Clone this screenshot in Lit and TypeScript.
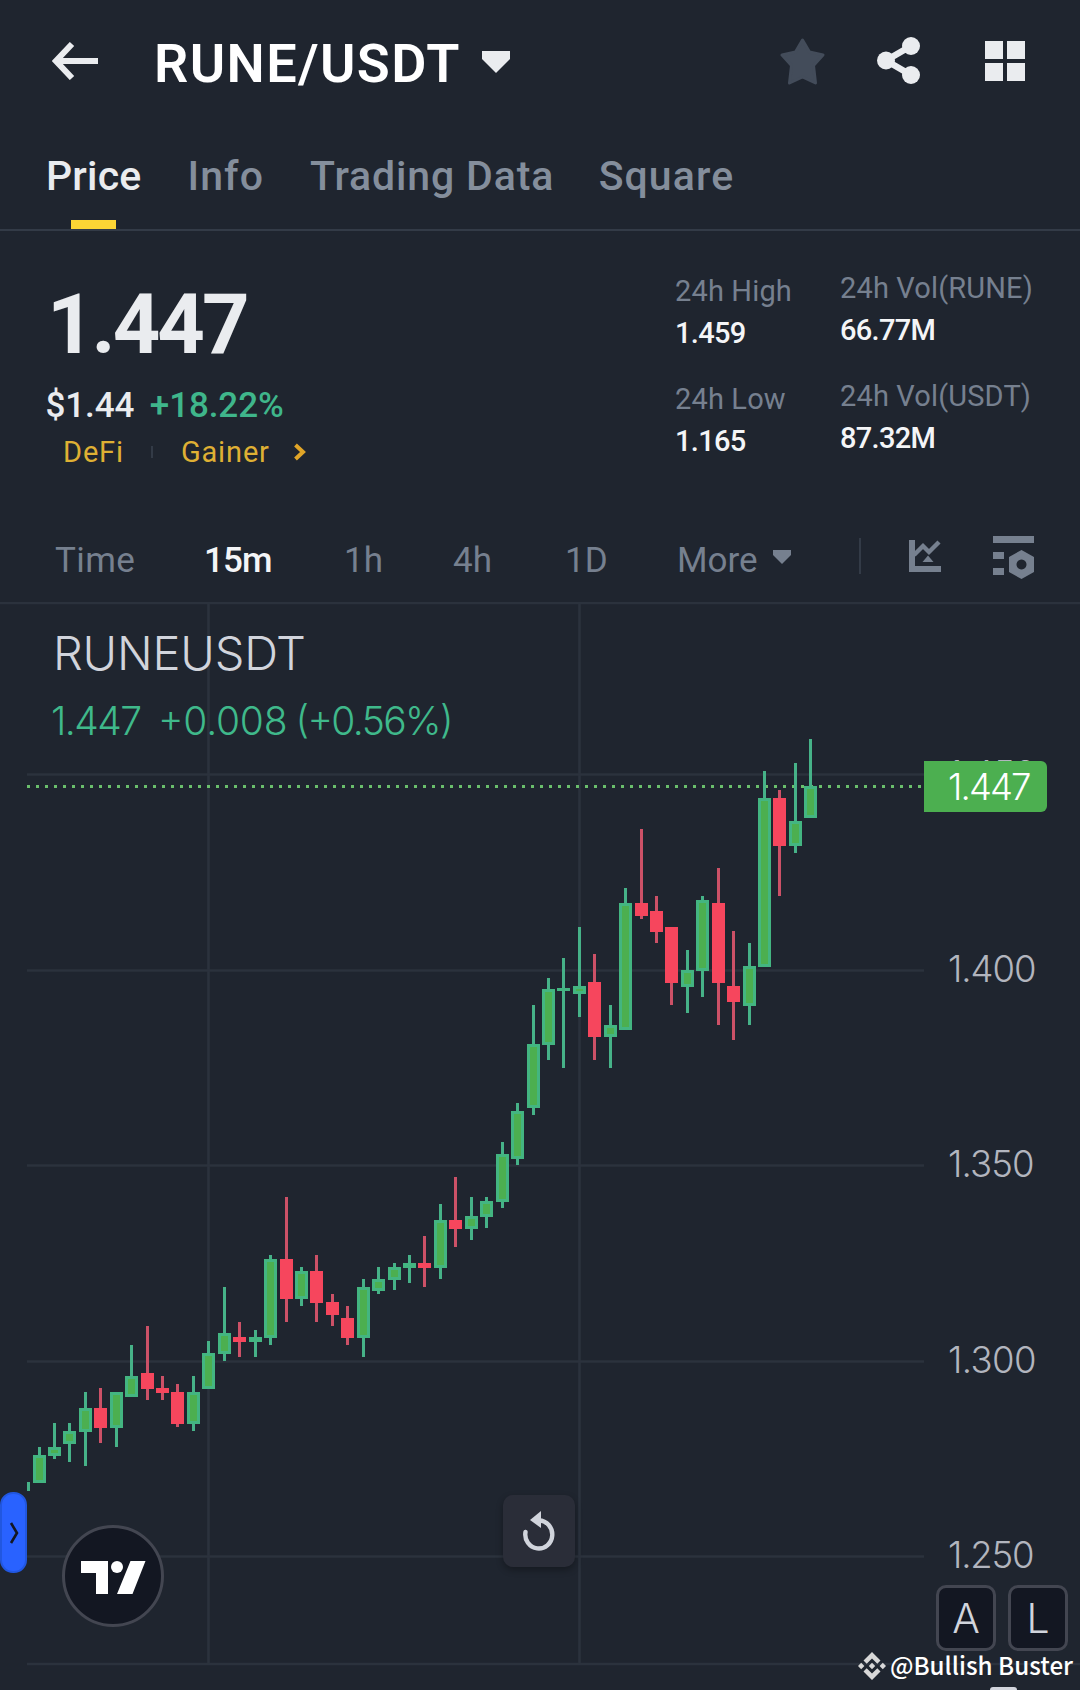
import { LitElement, html, svg, css } from "lit";
import { customElement } from "lit/decorators.js";
import { classMap } from "lit/directives/class-map.js";

type Candle = [x: number, up: 0 | 1, high: number, top: number, bottom: number, low: number];

// Candle geometry in page coordinates: centre, direction, wick top, body top, body bottom, wick bottom.
const CANDLES: Candle[] = [
  [39.5, 1, 1447, 1455, 1483, 1483], [54.5, 1, 1423, 1447, 1456, 1459],
  [69.5, 1, 1423, 1431, 1444, 1462], [85.5, 1, 1392, 1408, 1432, 1466],
  [100.5, 0, 1388, 1408, 1428, 1443], [116.5, 1, 1392, 1392, 1428, 1447],
  [131.5, 1, 1345, 1376, 1397, 1397], [147.5, 0, 1326, 1373, 1389, 1400],
  [162.5, 0, 1376, 1388, 1393, 1400], [177.5, 0, 1384, 1392, 1424, 1427],
  [193.5, 1, 1376, 1392, 1424, 1431], [208.5, 1, 1341, 1353, 1389, 1389],
  [224.5, 1, 1287, 1333, 1354, 1361], [239.5, 0, 1322, 1337, 1342, 1357],
  [255.5, 1, 1330, 1337, 1342, 1357], [270.5, 1, 1255, 1259, 1338, 1345],
  [286.5, 0, 1197, 1259, 1299, 1322], [301.5, 1, 1267, 1271, 1299, 1306],
  [316.5, 0, 1255, 1271, 1303, 1322], [332.5, 0, 1294, 1302, 1315, 1326],
  [347.5, 0, 1306, 1318, 1338, 1345], [363.5, 1, 1279, 1287, 1338, 1357],
  [378.5, 1, 1267, 1279, 1291, 1294], [394.5, 1, 1263, 1267, 1280, 1290],
  [409.5, 1, 1255, 1263, 1268, 1283], [424.5, 0, 1236, 1263, 1268, 1287],
  [440.5, 1, 1204, 1220, 1268, 1279], [455.5, 0, 1177, 1220, 1229, 1247],
  [471.5, 1, 1197, 1216, 1229, 1240], [486.5, 1, 1197, 1201, 1217, 1228],
  [502.5, 1, 1142, 1154, 1202, 1208], [517.5, 1, 1103, 1111, 1159, 1165],
  [533.5, 1, 1005, 1044, 1108, 1115], [548.5, 1, 978, 989, 1045, 1060],
  [563.5, 1, 958, 988, 991, 1068], [579.5, 1, 927, 986, 994, 1017],
  [594.5, 0, 954, 982, 1037, 1060], [610.5, 1, 1005, 1025, 1037, 1068],
  [625.5, 1, 888, 903, 1030, 1030], [641.5, 0, 829, 903, 916, 919],
  [656.5, 0, 896, 911, 932, 943], [671.5, 0, 927, 927, 983, 1005],
  [687.5, 1, 950, 970, 987, 1013], [702.5, 1, 896, 900, 971, 997],
  [718.5, 0, 868, 903, 983, 1025], [733.5, 0, 931, 986, 1002, 1040],
  [749.5, 1, 943, 966, 1006, 1025], [764.5, 1, 771, 798, 967, 967],
  [779.5, 0, 790, 798, 846, 896], [795.5, 1, 763, 821, 846, 853],
  [810.5, 1, 739, 786, 818, 818],
];

// Label, grid line position, text baseline.
const LEVELS: [string, number, number][] = [
  ["1.450", 774, 786.5], ["1.400", 970, 982.3], ["1.350", 1165, 1177.3], ["1.300", 1361, 1373.3], ["1.250", 1556, 1568.3],
];

@customElement("price-chart")
class PriceChart extends LitElement {
  static styles = css`
    :host { display: block; position: relative; height: 1088px; overflow: hidden; }
    .plot { display: block; width: 1080px; height: 1088px; }
    .plot text { font-family: Inter, "Liberation Sans", sans-serif; font-weight: 300; }
    .grid { stroke: #2b323d; stroke-width: 2.6; fill: none; }
    .tick { fill: #b2b5be; font-size: 36.5px; }
    .symbol { fill: #d1d4dc; font-size: 47px; }
    .quote { fill: #3fb98b; font-size: 39px; }
    .last { fill: #fff; font-size: 36.5px; }
    .up { fill: #43b581; }
    .up-fill { fill: #4caf50; }
    .up-wick { fill: #46b288; }
    .down { fill: #f6465d; }
    .down-wick { fill: #cc5167; }
    .dots { stroke: #6abf6c; stroke-width: 3; stroke-dasharray: 3 6; }
    .drawer, .reload, .brand, .keys, .mark { position: absolute; }
    .drawer { left: 0; top: 890px; width: 27px; height: 81px; border-radius: 13px; box-sizing: border-box;
      background: #2962ff; border: 2px solid #2157e0; display: grid; place-items: center; }
    .reload { left: 503px; top: 893px; width: 72px; height: 72px; border-radius: 10px; background: #2a2d38;
      display: grid; place-items: center; box-shadow: 0 3px 7px rgba(0, 0, 0, 0.32); }
    .brand { left: 61.5px; top: 923px; width: 102px; height: 102px; }
    .keys { right: 12px; top: 983px; display: flex; gap: 12px; }
    .key { width: 60px; height: 66px; box-sizing: border-box; border: 3px solid #434651; border-radius: 10px;
      background: #131722; color: #d1d4dc; font: 300 41px/60px Inter, "Liberation Sans", sans-serif; text-align: center; }
    .mark { right: 7px; top: 1048px; display: flex; align-items: center; gap: 4px; color: #fff;
      font: 500 24.2px/32px "Noto Sans CJK SC", sans-serif; white-space: nowrap; }
    .mark span { margin-top: -1px; }
    .handle { position: absolute; left: 990px; top: 1085px; width: 27px; height: 6px; border-radius: 3px; background: #d1d4dc; }
    svg { display: block; }
  `;

  private candle([x, up, high, top, bottom, low]: Candle) {
    const h = bottom - top;
    return svg`
      <rect class=${up ? "up-wick" : "down-wick"} x=${x - 1.5} y=${high} width="3" height=${low - high}></rect>
      <rect class=${up ? "up" : "down"} x=${x - 6.5} y=${top} width="13" height=${h}></rect>
      ${up && h > 7 ? svg`<rect class="up-fill" x=${x - 3.5} y=${top + 3} width="7" height=${h - 6}></rect>` : null}`;
  }

  render() {
    return html`
      <svg class="plot" viewBox="0 602 1080 1088">
        <path class="grid" d="M0 603H1080M208.5 603V1664M579.5 603V1664M27 1664H1080"></path>
        ${LEVELS.map(([label, y, base]) => svg`
          <path class="grid" d="M27 ${y + 0.5}H924"></path>
          <text class="tick" x="948" y=${base} textLength=${label === "1.350" || label === "1.250" ? 86.5 : 88.5}>${label}</text>`)}
        <path class="dots" d="M27 786.5H924"></path>
        <rect class="up-wick" x="27" y="1482" width="3" height="9"></rect>
        ${CANDLES.map((c) => this.candle(c))}
        <path class="up-fill" d="M924 761H1041a6 6 0 0 1 6 6V806a6 6 0 0 1-6 6H924Z"></path>
        <text class="last" x="948" y="799.5" textLength="83.5">1.447</text>
        <text class="symbol" x="53" y="670" textLength="253">RUNEUSDT</text>
        <text class="quote" x="51" y="735" textLength="91">1.447</text>
        <text class="quote" x="158" y="735" textLength="129.5">+0.008</text>
        <text class="quote" x="295.5" y="735" textLength="158">(+0.56%)</text>
      </svg>
      <div class="drawer">
        <svg width="12" height="24" viewBox="0 0 12 24"><path d="M3 2L9 12L3 22" fill="none" stroke="#131722" stroke-width="2.6"></path></svg>
      </div>
      <div class="brand">
        <svg width="102" height="102" viewBox="0 0 102 102">
          <circle cx="51" cy="51" r="49.5" fill="#131722" stroke="#434651" stroke-width="3"></circle>
          <path fill="#fff" d="M19 36H46V69H34V48H19ZM68.5 36H83.5L70.5 69H55Z"></path>
          <circle cx="55" cy="42" r="6" fill="#fff"></circle>
        </svg>
      </div>
      <div class="reload">
        <svg width="36" height="40" viewBox="0 0 36 40">
          <path d="M4.5 21A13.5 14 0 1 0 18 9.5" fill="none" stroke="#d1d4dc" stroke-width="4.4" stroke-linecap="round"></path>
          <path d="M20 0V17L9 9Z" fill="#d1d4dc"></path>
        </svg>
      </div>
      <div class="keys"><div class="key">A</div><div class="key">L</div></div>
      <div class="mark">
        <svg width="28" height="28" viewBox="0 0 28 28" fill="#d8d8d8">
          <path d="M14 0L22.5 8.5L19.3 11.7L14 6.4L8.7 11.7L5.5 8.5ZM14 28L22.5 19.5L19.3 16.3L14 21.6L8.7 16.3L5.5 19.5ZM14 10.8L17.2 14L14 17.2L10.8 14ZM3.2 10.8L6.4 14L3.2 17.2L0 14ZM24.8 10.8L28 14L24.8 17.2L21.6 14Z"></path>
        </svg>
        <span>@Bullish Buster</span>
      </div>
      <div class="handle"></div>`;
  }
}

@customElement("app-root")
class AppRoot extends LitElement {
  static styles = css`
    :host { display: block; width: 1080px; height: 1690px; overflow: hidden; background: #1f252f;
      color: #eaecef; font-family: Roboto, "Noto Sans", sans-serif; white-space: nowrap; }
    svg { display: block; }
    .header { display: flex; align-items: center; height: 124px; box-sizing: border-box; padding: 0 55px 2px 52px; }
    .pair { margin-left: 56px; padding-top: 5px; font-size: 54px; font-weight: 600; line-height: 60px; color: #fff; letter-spacing: 1.4px; }
    .pair-caret { margin: 1px 0 0 21px; }
    .actions { display: flex; align-items: center; margin-left: auto; }
    .star { margin-right: 52px; }
    .share { margin: -1px 65px 0 0; }
    .tabs { display: flex; height: 105px; padding: 27px 0 0 46px; box-sizing: border-box; gap: 46px; }
    .tab { display: flex; flex-direction: column; align-items: center; gap: 19px; font-size: 41px; line-height: 50px; font-weight: 500; color: #848e9c; letter-spacing: 1.1px; }
    .tab:nth-child(3) { letter-spacing: 0.85px; }
    .tab:nth-child(4) { margin-left: -1.5px; }
    .tab.active { color: #eaecef; letter-spacing: 0.2px; }
    .tab.active::after { content: ""; width: 45px; height: 9px; background: #fcd535; }
    .rule { height: 2px; background: #333b47; }
    .summary { display: grid; grid-template-columns: 628px 165px 1fr; height: 289px; padding-left: 47px; box-sizing: border-box; }
    .headline { padding-top: 54px; }
    .price { font-size: 83px; font-weight: 700; line-height: 80px; letter-spacing: -3px; }
    .change { display: flex; gap: 15.5px; margin: 21px 0 0 -1.5px; font-size: 35px; line-height: 40px; font-weight: 500; }
    .usd { letter-spacing: -0.1px; }
    .gain { color: #3fb68b; letter-spacing: -0.1px; }
    .tags { display: flex; align-items: center; margin: 11px 0 0 16px; font-size: 29px; line-height: 30px; color: #dfb034; letter-spacing: 0.85px; }
    .tag-split { width: 2px; height: 12px; margin: 0 28px 0 27px; background: #333b47; }
    .tag-arrow { margin: -1px 0 0 23px; }
    .stats { padding-top: 40px; font-size: 29px; line-height: 41px; }
    .stats.volume { padding-top: 37px; }
    .stat { margin-bottom: 26px; }
    .stat-name { color: #76808f; letter-spacing: 0.15px; }
    .stat-value { padding-top: 1px; margin-bottom: -1px; font-weight: 500; color: #f4f5f7; letter-spacing: -0.7px; }
    .intervals { display: flex; align-items: center; height: 82px; box-sizing: border-box; padding: 0 44px 2px 55px; font-size: 35px; line-height: 44px; color: #76808f; }
    .intervals span { padding-top: 1px; }
    .c0 { width: 149px; letter-spacing: 0.4px; }
    .c1 { width: 140px; }
    .c2 { width: 109px; }
    .c3 { width: 112px; }
    .c4 { width: 112px; }
    .c5 { width: 96px; }
    .chosen { color: #f4f5f7; font-weight: 500; letter-spacing: -0.9px; }
    .more-caret { margin-top: -7px; }
    .bar { width: 2px; height: 36px; margin: -8px 0 0 68px; background: #333b47; }
    .draw { margin: -9px 0 0 48px; }
    .settings { margin: -6px 0 0 52px; }
  `;

  render() {
    const tabs = ["Price", "Info", "Trading Data", "Square"];
    const intervals = ["Time", "15m", "1h", "4h", "1D", "More"];
    const stat = (name: string, value: string) => html`
      <div class="stat"><div class="stat-name">${name}</div><div class="stat-value">${value}</div></div>`;
    return html`
      <header class="header">
        <svg width="46" height="38" viewBox="0 0 46 38"><path d="M20 2L4 19L20 36M4 19H46" fill="none" stroke="#eaecef" stroke-width="6"></path></svg>
        <div class="pair">RUNE/USDT</div>
        <svg class="pair-caret" width="28" height="22" viewBox="0 0 28 22"><path d="M0 0H28V8L14 22L0 8Z" fill="#eaecef"></path></svg>
        <div class="actions">
          <svg class="star" width="45" height="47" viewBox="0 0 45 47"><path d="M22.5 2L29.5 14L43 17L33.5 27.5L35.5 45L22.5 39L9.5 45L11.5 27.5L2 17L15.5 14Z" fill="#434c5a" stroke="#434c5a" stroke-width="3" stroke-linejoin="round"></path></svg>
          <svg class="share" width="43" height="47" viewBox="0 0 43 47"><path d="M34 9L9 23.5L34 38" fill="none" stroke="#eaecef" stroke-width="6.5"></path><g fill="#eaecef"><circle cx="34" cy="9" r="9"></circle><circle cx="9" cy="23.5" r="9"></circle><circle cx="34" cy="38" r="9"></circle></g></svg>
          <svg width="40" height="40" viewBox="0 0 40 40"><path d="M0 0H18V18H0ZM22 0H40V18H22ZM0 22H18V40H0ZM22 22H40V40H22Z" fill="#eaecef"></path></svg>
        </div>
      </header>
      <nav class="tabs">
        ${tabs.map((t, i) => html`<div class=${classMap({ tab: true, active: i === 0 })}>${t}</div>`)}
      </nav>
      <div class="rule"></div>
      <section class="summary">
        <div class="headline">
          <div class="price">1.447</div>
          <div class="change"><span class="usd">$1.44</span><span class="gain">+18.22%</span></div>
          <div class="tags">
            <span>DeFi</span><i class="tag-split"></i><span>Gainer</span>
            <svg class="tag-arrow" width="13" height="18" viewBox="0 0 13 18"><path d="M2.5 2L10 9L2.5 16" fill="none" stroke="#e0a528" stroke-width="4"></path></svg>
          </div>
        </div>
        <div class="stats">${stat("24h High", "1.459")}${stat("24h Low", "1.165")}</div>
        <div class="stats volume">${stat("24h Vol(RUNE)", "66.77M")}${stat("24h Vol(USDT)", "87.32M")}</div>
      </section>
      <div class="intervals">
        ${intervals.map((t, i) => html`<span class="c${i} ${i === 1 ? "chosen" : ""}">${t}</span>`)}
        <svg class="more-caret" width="18" height="14" viewBox="0 0 18 14"><path d="M0 0H18V5L9 14L0 5Z" fill="#76808f"></path></svg>
        <i class="bar"></i>
        <svg class="draw" width="32" height="32" viewBox="0 0 32 32" fill="none" stroke="#76808f">
          <path d="M3 0V29H32" stroke-width="6"></path>
          <path d="M5 15L14 6L20 12L30 2" stroke-width="4.4"></path>
          <path d="M19 15.5L24.5 22H13.5Z" fill="#76808f" stroke="none"></path>
        </svg>
        <svg class="settings" width="41" height="43" viewBox="0 0 41 43" fill="#76808f">
          <path d="M0 0H41V7H0ZM0 16H11V23H0ZM0 32H11V39H0Z"></path>
          <path fill-rule="evenodd" d="M28.5 14L41 21V36L28.5 43L16 36V21ZM28.5 23.5a5 5 0 1 0 0.01 0Z"></path>
        </svg>
      </div>
      <price-chart></price-chart>`;
  }
}
